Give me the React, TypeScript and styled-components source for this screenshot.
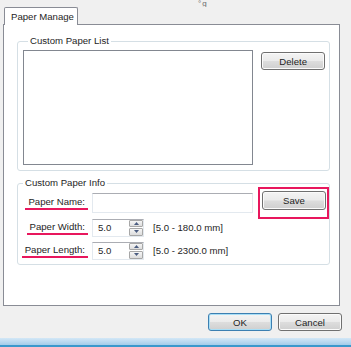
import React from "react";
import styled, { createGlobalStyle } from "styled-components";

const GlobalStyle = createGlobalStyle`
  html, body {
    margin: 0;
    padding: 0;
    background: #f0f0f0;
  }
  * {
    box-sizing: border-box;
  }
`;

const Window = styled.div`
  width: 351px;
  height: 347px;
  display: flex;
  flex-direction: column;
  overflow: hidden;
  background: #f0f0f0;
  font-family: "Liberation Sans", Tahoma, Arial, sans-serif;
  font-size: 9.6px;
  color: #1e1e1e;
`;

const TopStrip = styled.div`
  height: 7px;
  padding-left: 198px;
  display: flex;
  align-items: flex-end;
  overflow: hidden;

  span {
    font-size: 8px;
    line-height: 6px;
    color: #6a6a6a;
    letter-spacing: 1px;
  }
`;

const TabRow = styled.div`
  height: 17px;
  padding-left: 4px;
  display: flex;
  align-items: flex-end;
`;

const Tab = styled.div`
  position: relative;
  z-index: 1;
  width: 74px;
  height: 18px;
  margin-bottom: -1px;
  padding-left: 6px;
  display: flex;
  align-items: center;
  background: #fff;
  border: 1px solid #898c95;
  border-bottom: none;
  border-radius: 2px 2px 0 0;
`;

const Panel = styled.div`
  height: 282px;
  margin: 0 11px 0 3px;
  padding: 10px 9px 0 13px;
  display: flex;
  flex-direction: column;
  gap: 6px;
  background: #fff;
  border: 1px solid #898c95;
`;

const Group = styled.fieldset`
  margin: 0;
  padding: 3px 4px 5px 5px;
  border: 1px solid #d5dfe5;
  border-radius: 3px;
  min-width: 0;
`;

const Legend = styled.legend`
  margin-left: 5px;
  padding: 0 2px;
  line-height: 12px;
`;

const ListRow = styled.div`
  display: flex;
  align-items: flex-start;
  gap: 8px;
`;

const ListBox = styled.div`
  width: 231px;
  height: 115px;
  background: #fff;
  border: 1px solid #828790;
`;

const Button = styled.button<{ $default?: boolean }>`
  width: 64px;
  height: 18px;
  padding: 0;
  font-family: inherit;
  font-size: 9.6px;
  color: #1e1e1e;
  border: 1px solid ${(p) => (p.$default ? "#3c7fb1" : "#707070")};
  border-radius: 3px;
  background: linear-gradient(
    #f4f4f4 0%,
    #ebebeb 48%,
    #dddddd 52%,
    #cfcfcf 100%
  );
  box-shadow: inset 0 0 0 1px ${(p) => (p.$default ? "#a8def6" : "#fbfbfb")};
`;

const DeleteButton = styled(Button)`
  margin-top: 2px;
`;

const InfoGroup = styled(Group)`
  padding: 0 0 2px 0;
`;

const FieldRow = styled.div<{ $h: number }>`
  height: ${(p) => p.$h}px;
  display: flex;
  align-items: center;
`;

const LabelCell = styled.div`
  width: 74px;
  padding-right: 4px;
  display: flex;
  justify-content: flex-end;
`;

const Label = styled.span`
  padding: 0 3px;
  line-height: 12px;
  border-bottom: 2px solid #e8175d;
  white-space: nowrap;
`;

const TextInput = styled.div`
  width: 161px;
  height: 20px;
  background: #fff;
  border: 1px solid #e3e9ef;
  border-top-color: #abadb3;
`;

const Highlight = styled.div`
  margin: -4px 0 -4px 5px;
  padding: 2px 1px 7px 2px;
  border: 2px solid #e8175d;
`;

const SaveButton = styled(Button)`
  height: 19px;
`;

const Spinner = styled.div`
  width: 52px;
  height: 18px;
  display: flex;
  background: #fff;
  border: 1px solid #e3e9ef;
  border-top-color: #abadb3;
`;

const SpinValue = styled.div`
  flex: 1;
  padding-left: 5px;
  display: flex;
  align-items: center;
`;

const SpinButtons = styled.div`
  width: 14px;
  display: flex;
  flex-direction: column;
  gap: 1px;
`;

const SpinButton = styled.div`
  flex: 1;
  display: flex;
  align-items: center;
  justify-content: center;
  border: 1px solid #a7a7a7;
  border-radius: 1px;
  background: linear-gradient(#f6f6f6, #dcdcdc);

  svg {
    display: block;
  }
`;

const Range = styled.span`
  margin-left: 9px;
  white-space: nowrap;
`;

const Footer = styled.div`
  height: 32px;
  padding: 7px 9px 0 0;
  display: flex;
  justify-content: flex-end;
  gap: 6px;
`;

const StatusBar = styled.div`
  height: 9px;
  background: linear-gradient(#d3e7f6, #a3cdea);
  border-bottom: 2px solid #3a98cc;
`;

const Arrow = ({ up }: { up?: boolean }) => (
  <svg width="5" height="3" viewBox="0 0 5 3">
    <path d={up ? "M0 3 L2.5 0 L5 3 Z" : "M0 0 L2.5 3 L5 0 Z"} fill="#4a5c80" />
  </svg>
);

const SpinField = ({ value }: { value: string }) => (
  <Spinner>
    <SpinValue>{value}</SpinValue>
    <SpinButtons>
      <SpinButton>
        <Arrow up />
      </SpinButton>
      <SpinButton>
        <Arrow />
      </SpinButton>
    </SpinButtons>
  </Spinner>
);

const App: React.FC = () => {
  return (
    <>
      <GlobalStyle />
      <Window>
        <TopStrip>
          <span>°g</span>
        </TopStrip>
        <TabRow>
          <Tab>Paper Manage</Tab>
        </TabRow>
        <Panel>
          <Group>
            <Legend>Custom Paper List</Legend>
            <ListRow>
              <ListBox />
              <DeleteButton>Delete</DeleteButton>
            </ListRow>
          </Group>
          <InfoGroup>
            <Legend>Custom Paper Info</Legend>
            <FieldRow $h={27}>
              <LabelCell>
                <Label>Paper Name:</Label>
              </LabelCell>
              <TextInput />
              <Highlight>
                <SaveButton>Save</SaveButton>
              </Highlight>
            </FieldRow>
            <FieldRow $h={23}>
              <LabelCell>
                <Label>Paper Width:</Label>
              </LabelCell>
              <SpinField value="5.0" />
              <Range>[5.0 - 180.0 mm]</Range>
            </FieldRow>
            <FieldRow $h={23}>
              <LabelCell>
                <Label>Paper Length:</Label>
              </LabelCell>
              <SpinField value="5.0" />
              <Range>[5.0 - 2300.0 mm]</Range>
            </FieldRow>
          </InfoGroup>
        </Panel>
        <Footer>
          <Button $default>OK</Button>
          <Button>Cancel</Button>
        </Footer>
        <StatusBar />
      </Window>
    </>
  );
};

export default App;
